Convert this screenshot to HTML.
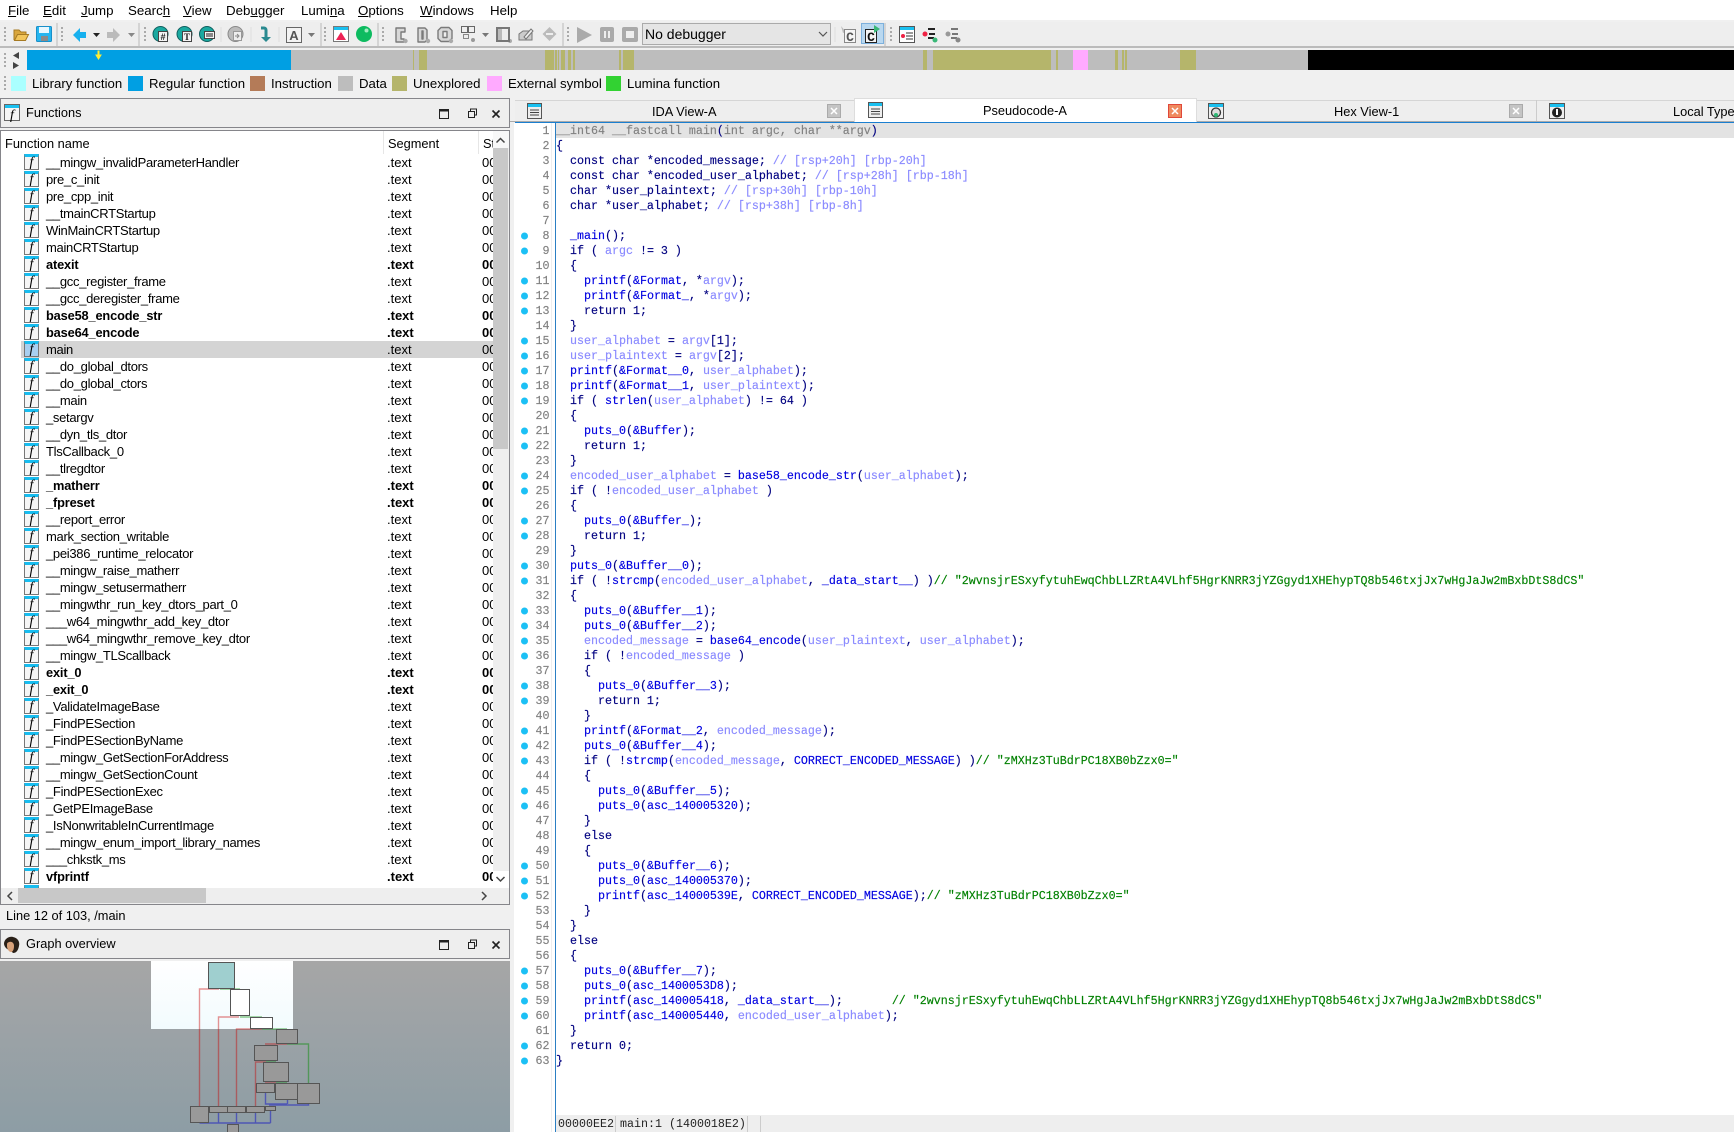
<!DOCTYPE html>
<html><head><meta charset="utf-8"><title>IDA</title>
<style>
html,body{margin:0;padding:0;width:1734px;height:1132px;overflow:hidden;background:#f0f0f0}
body{position:relative;font:13px/17px "Liberation Sans",sans-serif;color:#000}
.a{position:absolute;white-space:nowrap}
#menu{left:0;top:0;width:1734px;height:20px;background:#fff}
#menu span{position:absolute;top:2px;line-height:17px;font-size:13.3px}
#tb{left:0;top:22px;width:1734px;height:24px;background:#eee;border-bottom:2px solid #bbb}
.seg{position:absolute;top:50px;height:20px}
.sw{position:absolute;top:76px;width:15px;height:15px}
.lg{position:absolute;top:75px;font-size:13.2px}
.ph{left:0;width:508px;height:28px;background:#eee;border:1px solid #85858a}
.t{font-size:12.8px}
#fn{left:0;top:130px;width:508px;height:773px;background:#fff;border:1px solid #85858a;overflow:hidden}
#rows{position:absolute;left:0;top:23px;width:492px;height:734px;overflow:hidden}
#rows p{margin:0;height:17px;position:relative;white-space:nowrap}
#rows p.sel{background:#d4d4d4;margin-left:20px;width:472px;left:0}
#rows p.sel i{left:3px;background:#a9cff0}#rows p.sel span{left:25px}#rows p.sel em{left:366px}#rows p.sel b{left:461px}
#rows i{position:absolute;left:23px;top:0;width:13px;height:12px;border:1px solid #777;border-top:3px solid #17bdf0;background:#f6f6f6;font:italic 14px/12px "Liberation Serif",serif;text-align:center;color:#000}
#rows span{position:absolute;left:45px;top:0;font-size:13px;letter-spacing:-.3px}
#rows em{position:absolute;left:386px;top:0;font-style:normal}
#rows b{position:absolute;left:481px;top:0;font-weight:normal}
#rows p.x span{font-size:12.8px;letter-spacing:-.15px}
#rows p.x span,#rows p.x em,#rows p.x b{font-weight:bold}
#code{left:556px;top:124px;font:11.67px/15px "Liberation Mono",monospace;color:#000080;margin:0;white-space:pre;-webkit-text-stroke:.15px}
#nums{left:515px;top:124px;width:34.5px;text-align:right;font:11.67px/15px "Liberation Mono",monospace;color:#808080;margin:0;white-space:pre;-webkit-text-stroke:.15px}
.v{color:#8a8aff}.f{color:#0000e0}.s{color:#008000}.g{color:#808080}
</style></head><body>
<div class="a" id="menu">
<span style="left:8px"><u>F</u>ile</span><span style="left:43px"><u>E</u>dit</span><span style="left:81px"><u>J</u>ump</span><span style="left:128px">Searc<u>h</u></span><span style="left:183px"><u>V</u>iew</span><span style="left:226px">Deb<u>u</u>gger</span><span style="left:301px">Lumi<u>n</u>a</span><span style="left:358px"><u>O</u>ptions</span><span style="left:420px"><u>W</u>indows</span><span style="left:490px">Help</span>
</div>
<div class="a" id="tb"></div>
<div class="a" style="left:642px;top:23px;width:187px;height:20px;background:#e5e5e5;border:1px solid #aaa;font-size:14px;line-height:20px;text-indent:2px">No debugger</div>
<div class="seg" style="left:27px;width:264px;background:#009fe3"></div>
<div class="seg" style="left:291px;width:1017px;background:#bdbdbd"></div>
<div class="seg" style="left:1308px;width:426px;background:#000"></div>
<div class="seg" style="left:413px;width:1px;background:#b5b56b"></div><div class="seg" style="left:419px;width:8px;background:#b5b56b"></div>
<div class="seg" style="left:545px;width:9px;background:#b5b56b"></div><div class="seg" style="left:555px;width:2px;background:#b5b56b"></div><div class="seg" style="left:558px;width:1px;background:#b5b56b"></div><div class="seg" style="left:561px;width:4px;background:#b5b56b"></div><div class="seg" style="left:568px;width:3px;background:#b5b56b"></div><div class="seg" style="left:573px;width:2px;background:#b5b56b"></div>
<div class="seg" style="left:619px;width:2px;background:#b5b56b"></div><div class="seg" style="left:623px;width:11px;background:#b5b56b"></div>
<div class="seg" style="left:923px;width:4px;background:#b5b56b"></div><div class="seg" style="left:933px;width:118px;background:#b5b56b"></div><div class="seg" style="left:1056px;width:2px;background:#b5b56b"></div>
<div class="seg" style="left:1073px;width:15px;background:#ffaaff"></div>
<div class="seg" style="left:1115px;width:3px;background:#b5b56b"></div><div class="seg" style="left:1122px;width:2px;background:#b5b56b"></div><div class="seg" style="left:1125px;width:2px;background:#b5b56b"></div>
<div class="seg" style="left:1180px;width:16px;background:#b5b56b"></div>
<div class="sw" style="left:11px;background:#aaffff"></div><div class="lg" style="left:32px">Library function</div>
<div class="sw" style="left:128px;background:#009fe3"></div><div class="lg" style="left:149px">Regular function</div>
<div class="sw" style="left:250px;background:#b47b58"></div><div class="lg" style="left:271px">Instruction</div>
<div class="sw" style="left:338px;background:#bdbdbd"></div><div class="lg" style="left:359px">Data</div>
<div class="sw" style="left:392px;background:#b5b56b"></div><div class="lg" style="left:413px">Unexplored</div>
<div class="sw" style="left:487px;background:#ffaaff"></div><div class="lg" style="left:508px">External symbol</div>
<div class="sw" style="left:606px;background:#32d232"></div><div class="lg" style="left:627px">Lumina function</div>

<div class="a ph" style="top:98px"></div>
<div class="a t" style="left:26px;top:104px">Functions</div>
<div class="a" id="fn">
<div class="a t" style="left:4px;top:4px">Function name</div>
<div class="a t" style="left:387px;top:4px">Segment</div>
<div class="a t" style="left:482px;top:4px;width:10px;overflow:hidden">St</div>
<div class="a" style="left:382px;top:0;width:1px;height:23px;background:#e6e6e6"></div>
<div class="a" style="left:477px;top:0;width:1px;height:23px;background:#e6e6e6"></div>
<div id="rows">
<p><i>f</i><span>__mingw_invalidParameterHandler</span><em>.text</em><b>00</b></p>
<p><i>f</i><span>pre_c_init</span><em>.text</em><b>00</b></p>
<p><i>f</i><span>pre_cpp_init</span><em>.text</em><b>00</b></p>
<p><i>f</i><span>__tmainCRTStartup</span><em>.text</em><b>00</b></p>
<p><i>f</i><span>WinMainCRTStartup</span><em>.text</em><b>00</b></p>
<p><i>f</i><span>mainCRTStartup</span><em>.text</em><b>00</b></p>
<p class="x"><i>f</i><span>atexit</span><em>.text</em><b>00</b></p>
<p><i>f</i><span>__gcc_register_frame</span><em>.text</em><b>00</b></p>
<p><i>f</i><span>__gcc_deregister_frame</span><em>.text</em><b>00</b></p>
<p class="x"><i>f</i><span>base58_encode_str</span><em>.text</em><b>00</b></p>
<p class="x"><i>f</i><span>base64_encode</span><em>.text</em><b>00</b></p>
<p class="sel"><i>f</i><span>main</span><em>.text</em><b>00</b></p>
<p><i>f</i><span>__do_global_dtors</span><em>.text</em><b>00</b></p>
<p><i>f</i><span>__do_global_ctors</span><em>.text</em><b>00</b></p>
<p><i>f</i><span>__main</span><em>.text</em><b>00</b></p>
<p><i>f</i><span>_setargv</span><em>.text</em><b>00</b></p>
<p><i>f</i><span>__dyn_tls_dtor</span><em>.text</em><b>00</b></p>
<p><i>f</i><span>TlsCallback_0</span><em>.text</em><b>00</b></p>
<p><i>f</i><span>__tlregdtor</span><em>.text</em><b>00</b></p>
<p class="x"><i>f</i><span>_matherr</span><em>.text</em><b>00</b></p>
<p class="x"><i>f</i><span>_fpreset</span><em>.text</em><b>00</b></p>
<p><i>f</i><span>__report_error</span><em>.text</em><b>00</b></p>
<p><i>f</i><span>mark_section_writable</span><em>.text</em><b>00</b></p>
<p><i>f</i><span>_pei386_runtime_relocator</span><em>.text</em><b>00</b></p>
<p><i>f</i><span>__mingw_raise_matherr</span><em>.text</em><b>00</b></p>
<p><i>f</i><span>__mingw_setusermatherr</span><em>.text</em><b>00</b></p>
<p><i>f</i><span>__mingwthr_run_key_dtors_part_0</span><em>.text</em><b>00</b></p>
<p><i>f</i><span>___w64_mingwthr_add_key_dtor</span><em>.text</em><b>00</b></p>
<p><i>f</i><span>___w64_mingwthr_remove_key_dtor</span><em>.text</em><b>00</b></p>
<p><i>f</i><span>__mingw_TLScallback</span><em>.text</em><b>00</b></p>
<p class="x"><i>f</i><span>exit_0</span><em>.text</em><b>00</b></p>
<p class="x"><i>f</i><span>_exit_0</span><em>.text</em><b>00</b></p>
<p><i>f</i><span>_ValidateImageBase</span><em>.text</em><b>00</b></p>
<p><i>f</i><span>_FindPESection</span><em>.text</em><b>00</b></p>
<p><i>f</i><span>_FindPESectionByName</span><em>.text</em><b>00</b></p>
<p><i>f</i><span>__mingw_GetSectionForAddress</span><em>.text</em><b>00</b></p>
<p><i>f</i><span>__mingw_GetSectionCount</span><em>.text</em><b>00</b></p>
<p><i>f</i><span>_FindPESectionExec</span><em>.text</em><b>00</b></p>
<p><i>f</i><span>_GetPEImageBase</span><em>.text</em><b>00</b></p>
<p><i>f</i><span>_IsNonwritableInCurrentImage</span><em>.text</em><b>00</b></p>
<p><i>f</i><span>__mingw_enum_import_library_names</span><em>.text</em><b>00</b></p>
<p><i>f</i><span>___chkstk_ms</span><em>.text</em><b>00</b></p>
<p class="x"><i>f</i><span>vfprintf</span><em>.text</em><b>00</b></p>
<p><i></i></p>
</div>
<div class="a" style="left:492px;top:0;width:16px;height:757px;background:#eee"></div>
<div class="a" style="left:492px;top:0;width:16px;height:17px;background:#f8f8f8"></div>
<div class="a" style="left:492px;top:17px;width:15px;height:301px;background:#c8c8c8"></div>
<div class="a" style="left:492px;top:740px;width:16px;height:17px;background:#fff"></div>
<div class="a" style="left:0;top:757px;width:508px;height:16px;background:#eee"></div>
<div class="a" style="left:17px;top:757px;width:188px;height:15px;background:#c8c8c8"></div>
</div>
<div class="a t" style="left:6px;top:907px">Line 12 of 103, /main</div>
<div class="a ph" style="top:929px"></div>
<div class="a t" style="left:26px;top:935px">Graph overview</div>
<div class="a" style="left:0;top:961px;width:510px;height:171px;background:linear-gradient(#a6a6a6,#8d9da5)"></div>
<div class="a" style="left:151px;top:961px;width:142px;height:68px;background:linear-gradient(#fff,#f2fbfe)"></div>

<div class="a" style="left:515px;top:100px;width:1219px;height:21px;background:#eee;border-top:1px solid #d5d5d5"></div>
<div class="a" style="left:510px;top:121px;width:1224px;height:1px;background:#aaa"></div>
<div class="a" style="left:854px;top:98px;width:343px;height:24px;background:#fff;border:1px solid #ddd;border-bottom:0;box-sizing:border-box"></div>
<div class="a" style="left:1536px;top:100px;width:1px;height:21px;background:#ccc"></div>
<div class="a" style="left:515px;top:122px;width:1219px;height:1px;background:#1b7fd0"></div>
<div class="a t" style="left:652px;top:103px">IDA View-A</div>
<div class="a t" style="left:983px;top:102px">Pseudocode-A</div>
<div class="a t" style="left:1334px;top:103px">Hex View-1</div>
<div class="a t" style="left:1673px;top:103px">Local Types</div>

<div class="a" style="left:514px;top:123px;width:1220px;height:1009px;background:#fff"></div>
<div class="a" style="left:551px;top:123px;width:1px;height:1009px;background:#eee"></div>
<div class="a" style="left:555px;top:123px;width:1px;height:1009px;background:#2b7fc3"></div>
<div class="a" style="left:556px;top:123px;width:1178px;height:15px;background:#e3e3e3"></div>
<div class="a" style="left:556px;top:1115px;width:1178px;height:17px;background:#eee"></div>
<div class="a" style="left:615px;top:1116px;width:1px;height:16px;background:#ccc"></div>
<div class="a" style="left:747px;top:1116px;width:1px;height:16px;background:#ccc"></div>
<div class="a" style="left:760px;top:1116px;width:1px;height:16px;background:#ccc"></div>
<div class="a" style="left:558px;top:1117px;font:11.67px/15px 'Liberation Mono',monospace;color:#222;white-space:pre">00000EE2</div>
<div class="a" style="left:620px;top:1117px;font:11.67px/15px 'Liberation Mono',monospace;color:#222;white-space:pre">main:1 (1400018E2)</div>

<pre class="a" id="nums">1
2
3
4
5
6
7
8
9
10
11
12
13
14
15
16
17
18
19
20
21
22
23
24
25
26
27
28
29
30
31
32
33
34
35
36
37
38
39
40
41
42
43
44
45
46
47
48
49
50
51
52
53
54
55
56
57
58
59
60
61
62
63</pre>
<pre class="a" id="code"><span class="g">__int64 __fastcall main</span>(<span class="g">int argc, char **argv</span>)
{
  const char *encoded_message; <span class="v">// [rsp+20h] [rbp-20h]</span>
  const char *encoded_user_alphabet; <span class="v">// [rsp+28h] [rbp-18h]</span>
  char *user_plaintext; <span class="v">// [rsp+30h] [rbp-10h]</span>
  char *user_alphabet; <span class="v">// [rsp+38h] [rbp-8h]</span>

  <span class="f">_main</span>();
  if ( <span class="v">argc</span> != 3 )
  {
    <span class="f">printf</span>(<span class="f">&amp;Format</span>, *<span class="v">argv</span>);
    <span class="f">printf</span>(<span class="f">&amp;Format_</span>, *<span class="v">argv</span>);
    return 1;
  }
  <span class="v">user_alphabet</span> = <span class="v">argv</span>[1];
  <span class="v">user_plaintext</span> = <span class="v">argv</span>[2];
  <span class="f">printf</span>(<span class="f">&amp;Format__0</span>, <span class="v">user_alphabet</span>);
  <span class="f">printf</span>(<span class="f">&amp;Format__1</span>, <span class="v">user_plaintext</span>);
  if ( <span class="f">strlen</span>(<span class="v">user_alphabet</span>) != 64 )
  {
    <span class="f">puts_0</span>(<span class="f">&amp;Buffer</span>);
    return 1;
  }
  <span class="v">encoded_user_alphabet</span> = <span class="f">base58_encode_str</span>(<span class="v">user_alphabet</span>);
  if ( !<span class="v">encoded_user_alphabet</span> )
  {
    <span class="f">puts_0</span>(<span class="f">&amp;Buffer_</span>);
    return 1;
  }
  <span class="f">puts_0</span>(<span class="f">&amp;Buffer__0</span>);
  if ( !<span class="f">strcmp</span>(<span class="v">encoded_user_alphabet</span>, <span class="f">_data_start__</span>) )<span class="s">// "2wvnsjrESxyfytuhEwqChbLLZRtA4VLhf5HgrKNRR3jYZGgyd1XHEhypTQ8b546txjJx7wHgJaJw2mBxbDtS8dCS"</span>
  {
    <span class="f">puts_0</span>(<span class="f">&amp;Buffer__1</span>);
    <span class="f">puts_0</span>(<span class="f">&amp;Buffer__2</span>);
    <span class="v">encoded_message</span> = <span class="f">base64_encode</span>(<span class="v">user_plaintext</span>, <span class="v">user_alphabet</span>);
    if ( !<span class="v">encoded_message</span> )
    {
      <span class="f">puts_0</span>(<span class="f">&amp;Buffer__3</span>);
      return 1;
    }
    <span class="f">printf</span>(<span class="f">&amp;Format__2</span>, <span class="v">encoded_message</span>);
    <span class="f">puts_0</span>(<span class="f">&amp;Buffer__4</span>);
    if ( !<span class="f">strcmp</span>(<span class="v">encoded_message</span>, <span class="f">CORRECT_ENCODED_MESSAGE</span>) )<span class="s">// "zMXHz3TuBdrPC18XB0bZzx0="</span>
    {
      <span class="f">puts_0</span>(<span class="f">&amp;Buffer__5</span>);
      <span class="f">puts_0</span>(<span class="f">asc_140005320</span>);
    }
    else
    {
      <span class="f">puts_0</span>(<span class="f">&amp;Buffer__6</span>);
      <span class="f">puts_0</span>(<span class="f">asc_140005370</span>);
      <span class="f">printf</span>(<span class="f">asc_14000539E</span>, <span class="f">CORRECT_ENCODED_MESSAGE</span>);<span class="s">// "zMXHz3TuBdrPC18XB0bZzx0="</span>
    }
  }
  else
  {
    <span class="f">puts_0</span>(<span class="f">&amp;Buffer__7</span>);
    <span class="f">puts_0</span>(<span class="f">asc_1400053D8</span>);
    <span class="f">printf</span>(<span class="f">asc_140005418</span>, <span class="f">_data_start__</span>);       <span class="s">// "2wvnsjrESxyfytuhEwqChbLLZRtA4VLhf5HgrKNRR3jYZGgyd1XHEhypTQ8b546txjJx7wHgJaJw2mBxbDtS8dCS"</span>
    <span class="f">printf</span>(<span class="f">asc_140005440</span>, <span class="v">encoded_user_alphabet</span>);
  }
  return 0;
}</pre>

<svg class="a" style="left:0;top:0" width="1734" height="1132" viewBox="0 0 1734 1132" font-family="Liberation Sans,sans-serif">
<!-- toolbar separators -->
<g stroke="#bbb" fill="none"><path d="M57 23v23M139 23v23M321 23v23M378 23v23M563 23v23M885 23v23"/><path d="M221 27v15M251 27v15M279 27v15M835 27v15" stroke="#ddd"/></g>
<g stroke="#aaa" stroke-width="2" stroke-dasharray="2 2" fill="none"><path d="M5 27v16M62 27v16M145 27v16M325 27v16M383 27v16M568 27v16M891 27v16M5 53v16M5 76v16"/></g>
<!-- folder -->
<path d="M14 40V30h5l2 2h5v3" fill="#d9a63c" stroke="#a67a22"/><path d="M14.500 40.500l3-6h11l-3 6z" fill="#f2c55a" stroke="#a67a22"/>
<!-- save -->
<rect x="36.500" y="26.500" width="15" height="15" rx="1" fill="#25b5ef" stroke="#1a8fc8"/><rect x="39" y="27" width="10" height="6" fill="#e8f8ff"/><rect x="41" y="36" width="7" height="5" fill="#8a8a8a"/>
<!-- nav -->
<path d="M73 35l7-7v4h6v6h-6v4z" fill="#17b0ee"/><path d="M93 33h7l-3.500 4z" fill="#222"/>
<path d="M120 35l-7-7v4h-6v6h6v4z" fill="#bbb"/><path d="M128 33h7l-3.500 4z" fill="#888"/>
<!-- teal -->
<g fill="#1aa9a0" stroke="#0f5f5f"><circle cx="160.500" cy="34" r="7.500"/><circle cx="184.500" cy="34" r="7.500"/><circle cx="207" cy="34" r="7.500"/></g>
<g fill="#f4f4f4" stroke="#444"><rect x="158.500" y="31.500" width="9" height="10"/><rect x="182.500" y="31.500" width="9" height="10"/><rect x="204.500" y="31.500" width="10" height="7"/></g>
<text x="163" y="40" font-size="9" font-weight="bold" text-anchor="middle" fill="#222">#</text><text x="187" y="40" font-size="9" font-weight="bold" text-anchor="middle" fill="#222" font-family="Liberation Serif,serif">T</text><rect x="206" y="33" width="7" height="4" fill="#888"/>
<circle cx="235.500" cy="34" r="7.500" fill="#bbb" stroke="#888"/><rect x="233.500" y="31.500" width="8" height="9" fill="#eee" stroke="#999"/><path d="M235 36h3M237 34l2 2-2 2" stroke="#888" fill="none"/>
<path d="M261 28h3a2 2 0 0 1 2 2v8" stroke="#2a8a90" stroke-width="3" fill="none"/><path d="M261 37h10l-5 5z" fill="#2a8a90"/>
<rect x="286.500" y="27.500" width="15" height="15" fill="#f3f3f3" stroke="#666"/><text x="294" y="40" font-size="13" font-weight="bold" text-anchor="middle" fill="#555">A</text><path d="M308 33h7l-3.500 4z" fill="#777"/>
<rect x="333.500" y="26.500" width="15" height="15" fill="#fff" stroke="#777"/><rect x="334" y="27" width="14" height="3" fill="#19c0f0"/><path d="M336 40l5-8 5 8z" fill="#ee2255"/>
<circle cx="364" cy="34" r="8" fill="#0dbb60"/><circle cx="366.500" cy="30.500" r="2" fill="#9fecc0"/>
<!-- grey tools -->
<g fill="#d8d8d8" stroke="#7a7a7a" stroke-width="1.400" stroke-linejoin="round">
<path d="M396 28h9v4h-4v7h3v3h-8z"/>
<path d="M418 28h7l2 2v10l-2 2h-7zM422 31v8h1v-8z" fill-rule="evenodd"/>
<path d="M441 27.500h8l3 3v8l-3 3h-8l-3-3v-8zM443 31.500v6h4v-6z" fill-rule="evenodd"/>
</g>
<g fill="#aaa"><circle cx="405.500" cy="41" r="2.200"/><circle cx="428" cy="41" r="2.200"/><circle cx="451" cy="41" r="2.200"/><circle cx="510" cy="41" r="2"/></g>
<rect x="461.500" y="26.500" width="6" height="6" fill="#eee" stroke="#666"/><rect x="468.500" y="26.500" width="6" height="6" fill="#eee" stroke="#666"/><rect x="463.500" y="34.500" width="5" height="4" fill="#eee" stroke="#888"/><circle cx="473" cy="40" r="2" fill="#999"/><path d="M482 33h7l-3.500 4z" fill="#777"/>
<rect x="497" y="28" width="12" height="13" fill="#eee" stroke="#777" stroke-width="2"/><rect x="498" y="29" width="4" height="11" fill="#bbb"/>
<path d="M519 40v-6l4-3h9v9z" fill="#ccc" stroke="#777"/><path d="M524 37l7-8 2 2-7 8z" fill="#eee" stroke="#777"/>
<path d="M549.500 27l7 7-7 7-7-7z" fill="#bbb"/><rect x="546" y="33" width="7" height="2" fill="#eee"/>
<path d="M577 27l15 8-15 8z" fill="#aaa"/>
<rect x="600" y="27" width="14" height="15" rx="2" fill="#aaa"/><rect x="604" y="31" width="2" height="7" fill="#eee"/><rect x="608" y="31" width="2" height="7" fill="#eee"/>
<rect x="622" y="27" width="16" height="15" rx="2" fill="#aaa"/><rect x="626" y="31" width="8" height="7" fill="#eee"/>
<path d="M819 32l4 4 4-4" stroke="#555" fill="none" stroke-width="1.200"/>
<path d="M841 26l5 6-3 1z" fill="#bbb"/><rect x="844.500" y="29.500" width="11" height="13" fill="#f5f5f5" stroke="#888"/><text x="850" y="41" font-size="13" font-weight="bold" text-anchor="middle" fill="#555" font-family="Liberation Mono,monospace">C</text>
<rect x="861.500" y="23.500" width="22" height="20" fill="#b9d8f0" stroke="#7db0dc"/><rect x="865.500" y="29.500" width="11" height="13" fill="#f5f5f5" stroke="#222"/><text x="871" y="41" font-size="13" font-weight="bold" text-anchor="middle" fill="#111" font-family="Liberation Mono,monospace">C</text><path d="M874 25l6 4-6 4z" fill="#3ab878"/>
<rect x="899.500" y="26.500" width="15" height="16" fill="#fff" stroke="#555"/><rect x="900" y="27" width="14" height="3" fill="#19c0f0"/><circle cx="903" cy="36" r="2" fill="#ee2244"/><path d="M906 33h7M906 36h7M906 39h7" stroke="#333"/>
<circle cx="925" cy="34" r="2.500" fill="#ee2244"/><path d="M928 29h7M929 34h6M928 38h6" stroke="#222" stroke-width="2"/><circle cx="935" cy="40" r="2.500" fill="#3ab878"/>
<circle cx="948" cy="34" r="2.500" fill="#999"/><path d="M951 29h7M952 34h6M951 38h6" stroke="#777" stroke-width="2"/><circle cx="958" cy="40" r="2.500" fill="#888"/>
<!-- nav arrows -->
<path d="M19 52v7l-6-3.500z" fill="#444"/><path d="M13 62v7l6-3.500z" fill="#444"/>
<path d="M98 51v4h-2l2.500 4 2.500-4h-2v-4z" fill="#ffee33" stroke="#ffee33"/>
<!-- panel header icons -->
<rect x="4.500" y="104.500" width="15" height="16" fill="#f5f5f5" stroke="#666"/><rect x="5" y="105" width="14" height="3" fill="#19c0f0"/><text x="12" y="119" font-size="14" font-style="italic" text-anchor="middle" font-family="Liberation Serif,serif">f</text>
<g fill="none" stroke="#222"><rect x="439.500" y="109.500" width="9" height="9"/><path d="M439 110.500h10" stroke-width="2"/><rect x="468.500" y="111.500" width="6" height="6"/><path d="M470.500 111v-2h6v6h-2"/><path d="M492.500 110.500l7 7m0-7l-7 7" stroke-width="1.600"/>
<rect x="439.500" y="940.500" width="9" height="9"/><path d="M439 941.500h10" stroke-width="2"/><rect x="468.500" y="942.500" width="6" height="6"/><path d="M470.500 942v-2h6v6h-2"/><path d="M492.500 941.500l7 7m0-7l-7 7" stroke-width="1.600"/></g>
<!-- portrait -->
<path d="M4 944c0-5 5-8 9-7 5 1 7 5 6 9-1 5-3 7-6 7-2-3-8-3-9-9z" fill="#2a2018"/><path d="M9 942c3-1 5 1 5 4s-1 6-3 6-4-3-4-6 0-3 2-4z" fill="#d9a27a"/>
<!-- scroll arrows -->
<g fill="none" stroke="#444" stroke-width="1.500"><path d="M496.500 142.500l4-4 4 4M496.500 877l4 4 4-4M12 892l-4 4 4 4M482 892l4 4-4 4"/></g>
<!-- tab icons -->
<g><rect x="527.500" y="103.500" width="14" height="15" fill="#eee" stroke="#555"/><rect x="528" y="104" width="13" height="3" fill="#19c0f0"/><path d="M530 110h9M530 112.500h9M530 115h9" stroke="#444"/>
<rect x="868.500" y="102.500" width="14" height="15" fill="#eee" stroke="#555"/><rect x="869" y="103" width="13" height="3" fill="#19c0f0"/><path d="M871 109h9M871 111.500h9M871 114h9" stroke="#444"/>
<rect x="1208.500" y="103.500" width="15" height="15" fill="#eee" stroke="#555"/><rect x="1209" y="104" width="14" height="3" fill="#19c0f0"/><circle cx="1216" cy="112.500" r="4.500" fill="#ddd" stroke="#333" stroke-width="1.300"/><circle cx="1216" cy="115" r="2" fill="#2bb673"/>
<rect x="1549.500" y="103.500" width="15" height="15" fill="#eee" stroke="#555"/><rect x="1550" y="104" width="14" height="3" fill="#19c0f0"/><circle cx="1557" cy="112.500" r="5" fill="#222"/><rect x="1556" y="109" width="2" height="6" fill="#fff"/></g>
<!-- close buttons -->
<rect x="827.500" y="104.500" width="13" height="13" fill="#c4c4c4" stroke="#aaa"/><path d="M831 108l6 6m0-6l-6 6" stroke="#fff" stroke-width="1.500"/>
<rect x="1168.500" y="104.500" width="13" height="13" fill="#ef8a5f" stroke="#e0483a"/><path d="M1172 108l6 6m0-6l-6 6" stroke="#fff" stroke-width="1.500"/>
<rect x="1509.500" y="104.500" width="13" height="13" fill="#c4c4c4" stroke="#aaa"/><path d="M1513 108l6 6m0-6l-6 6" stroke="#fff" stroke-width="1.500"/>
<!-- breakpoint dots -->
<g fill="#1cc0f5"><circle cx="524.500" cy="236" r="3.500"/><circle cx="524.500" cy="251" r="3.500"/><circle cx="524.500" cy="281" r="3.500"/><circle cx="524.500" cy="296" r="3.500"/><circle cx="524.500" cy="311" r="3.500"/><circle cx="524.500" cy="341" r="3.500"/><circle cx="524.500" cy="356" r="3.500"/><circle cx="524.500" cy="371" r="3.500"/><circle cx="524.500" cy="386" r="3.500"/><circle cx="524.500" cy="401" r="3.500"/><circle cx="524.500" cy="431" r="3.500"/><circle cx="524.500" cy="446" r="3.500"/><circle cx="524.500" cy="476" r="3.500"/><circle cx="524.500" cy="491" r="3.500"/><circle cx="524.500" cy="521" r="3.500"/><circle cx="524.500" cy="536" r="3.500"/><circle cx="524.500" cy="566" r="3.500"/><circle cx="524.500" cy="581" r="3.500"/><circle cx="524.500" cy="611" r="3.500"/><circle cx="524.500" cy="626" r="3.500"/><circle cx="524.500" cy="641" r="3.500"/><circle cx="524.500" cy="656" r="3.500"/><circle cx="524.500" cy="686" r="3.500"/><circle cx="524.500" cy="701" r="3.500"/><circle cx="524.500" cy="731" r="3.500"/><circle cx="524.500" cy="746" r="3.500"/><circle cx="524.500" cy="761" r="3.500"/><circle cx="524.500" cy="791" r="3.500"/><circle cx="524.500" cy="806" r="3.500"/><circle cx="524.500" cy="866" r="3.500"/><circle cx="524.500" cy="881" r="3.500"/><circle cx="524.500" cy="896" r="3.500"/><circle cx="524.500" cy="971" r="3.500"/><circle cx="524.500" cy="986" r="3.500"/><circle cx="524.500" cy="1001" r="3.500"/><circle cx="524.500" cy="1016" r="3.500"/><circle cx="524.500" cy="1046" r="3.500"/><circle cx="524.500" cy="1061" r="3.500"/></g>
<!-- graph edges -->
<g fill="none" stroke-width="1.400">
<g stroke="rgba(200,0,0,.42)"><path d="M219 989H199.500V1106M239 1017H218.500V1106M262 1029H236.500V1106M287 1044H265M266 1062H255.500V1106M276 1082H265"/></g>
<g stroke="rgba(0,140,0,.45)"><path d="M220 989H240M240 1017H262M262 1029H287M287 1044H308.500V1083M266 1062H276M276 1082H287"/></g>
<g stroke="rgba(0,0,200,.45)"><path d="M265.500 1093V1104H287M287.500 1100V1104M269 1105H308.500V1104M218.500 1113V1123M236.500 1113V1123M255.500 1113V1123M270.500 1111V1123M199.500 1123H270.500"/></g>
</g>
<g stroke="#555" stroke-width="1" fill="#999">
<rect x="208.500" y="962.500" width="26" height="26" fill="#9fcfcf"/>
<rect x="230.500" y="989.500" width="19" height="26" fill="#fff"/>
<rect x="250.500" y="1017.500" width="22" height="11" fill="#fff"/>
<rect x="276.500" y="1029.500" width="21" height="14"/>
<rect x="254.500" y="1045.500" width="23" height="15"/>
<rect x="263.500" y="1062.500" width="25" height="19"/>
<rect x="256.500" y="1083.500" width="18" height="9"/>
<rect x="275.500" y="1083.500" width="22" height="16"/>
<rect x="297.500" y="1083.500" width="22" height="20"/>
<rect x="190.500" y="1106.500" width="18" height="16"/>
<rect x="209.500" y="1106.500" width="18" height="6"/>
<rect x="227.500" y="1106.500" width="18" height="6"/>
<rect x="246.500" y="1106.500" width="18" height="6"/>
<rect x="265.500" y="1106.500" width="10" height="4"/>
<rect x="227.500" y="1124.500" width="11" height="12"/>
</g>
</svg>
</body></html>
